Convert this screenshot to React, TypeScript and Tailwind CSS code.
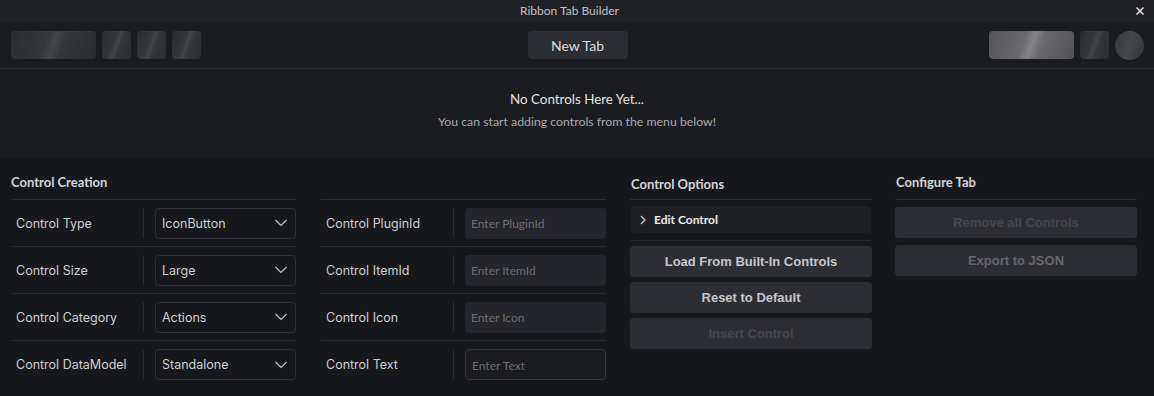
import React from 'react';

const src = { fontFamily: 'Lato, "Noto Sans", sans-serif' };
const ui = { fontFamily: 'Inter, "Noto Sans", sans-serif' };
const arial = { fontFamily: '"Liberation Sans", Arial, sans-serif' };

const Skeleton = ({ className, light }: { className: string; light?: boolean }) => (
  <div
    className={`h-[28px] rounded-[4px] ${className} ${
      light
        ? 'bg-[linear-gradient(110deg,#54555a_0%,#6a6a6e_40%,#858586_50%,#6a6a6e_60%,#505156_100%)]'
        : 'bg-[linear-gradient(110deg,#2c2d31_0%,#36373b_40%,#444549_50%,#36373b_60%,#2b2c30_100%)]'
    }`}
  />
);

const ChevronDown = () => (
  <svg width="12" height="8" viewBox="0 0 12 8" fill="none" className="shrink-0">
    <polyline points="0.5,1 6,6.5 11.5,1" stroke="#c8c8cc" strokeWidth="1.1" />
  </svg>
);

const Row = ({ label, children, last }: { label: string; children: React.ReactNode; last?: boolean }) => (
  <div className={`h-[47px] flex items-center ${last ? '' : 'border-b border-[#2b2c31]'}`}>
    <div className="w-[132px] pl-[5px] pt-[2px] text-[12.5px] text-[#cfd0d3]" style={ui}>{label}</div>
    <div className="w-px h-[30px] bg-[#2b2c31]" />
    <div className="flex-1 pl-[11px]">{children}</div>
  </div>
);

const Select = ({ value }: { value: string }) => (
  <div className="h-[31px] rounded-[4px] border border-[#2f3036] flex items-center justify-between pl-[6px] pr-[8px]">
    <span className="text-[12.5px] text-[#cfd0d3] pt-[2px]" style={ui}>{value}</span>
    <ChevronDown />
  </div>
);

const Input = ({ placeholder, bordered }: { placeholder: string; bordered?: boolean }) => (
  <div
    className={`h-[31px] rounded-[4px] flex items-center pl-[6px] ${
      bordered ? 'border border-[#33343a] bg-[#1b1c20]' : 'bg-[#25262b]'
    }`}
  >
    <span className="text-[12px] text-[#6c6d72] pt-[2px]" style={src}>{placeholder}</span>
  </div>
);

const Btn = ({ children, disabled }: { children: React.ReactNode; disabled?: boolean }) => (
  <div
    className={`h-[31px] rounded-[4px] bg-[#2d2e33] flex items-center justify-center text-[13px] font-bold ${
      disabled ? 'text-[#46474d]' : 'text-[#c5c6ca]'
    }`}
    style={arial}
  >
    {children}
  </div>
);

const Heading = ({ children, className }: { children: React.ReactNode; className?: string }) => (
  <div className={`h-[42px] flex items-end border-b border-[#2b2c31] text-[13px] font-bold text-[#d4d5d8] ${className || 'pb-[7px]'}`} style={src}>
    {children}
  </div>
);

export default function App() {
  return (
    <div className="w-[1154px] h-[396px] bg-[#1b1c20] flex flex-col overflow-hidden">
      {/* title bar */}
      <div className="h-[22px] bg-[#202125] flex items-center justify-center pr-[15px] relative shrink-0">
        <span className="text-[12px] text-[#bfc0c4]" style={src}>Ribbon Tab Builder</span>
        <svg className="absolute right-[10px] top-[7px]" width="8" height="8" viewBox="0 0 8 8">
          <path d="M0.5 0.5 L7.5 7.5 M7.5 0.5 L0.5 7.5" stroke="#e8e8ea" strokeWidth="1.5" />
        </svg>
      </div>

      {/* toolbar */}
      <div className="h-[47px] shrink-0 flex items-center justify-between pl-[11px] pr-[10px] border-b border-[#2b2c31]">
        <div className="flex gap-[6px] w-[190px]">
          <Skeleton className="w-[85px]" />
          <Skeleton className="w-[29px]" />
          <Skeleton className="w-[29px]" />
          <Skeleton className="w-[29px]" />
        </div>
        <div className="w-[100px] h-[28px] rounded-[4px] bg-[#2d2e33] flex items-center justify-center text-[14px] text-[#dcdde0]" style={src}>
          New Tab
        </div>
        <div className="flex gap-[6px] w-[190px] justify-end">
          <Skeleton className="w-[85px]" light />
          <Skeleton className="w-[29px]" />
          <div className="w-[29px] h-[29px] rounded-full bg-[linear-gradient(110deg,#36373b_0%,#46474b_50%,#34353a_100%)]" />
        </div>
      </div>

      {/* empty state */}
      <div className="h-[89px] shrink-0 flex flex-col items-center pt-[21px]">
        <div className="text-[13.4px] text-[#e2e3e6] leading-[18px]" style={src}>No Controls Here Yet...</div>
        <div className="text-[12.3px] text-[#a9aaae] leading-[16px] mt-[6px]" style={src}>You can start adding controls from the menu below!</div>
      </div>

      {/* panel */}
      <div className="flex-1 bg-[#17181c] flex pl-[11px]">
        <div className="w-[285px]">
          <Heading>Control Creation</Heading>
          <Row label="Control Type"><Select value="IconButton" /></Row>
          <Row label="Control Size"><Select value="Large" /></Row>
          <Row label="Control Category"><Select value="Actions" /></Row>
          <Row label="Control DataModel" last><Select value="Standalone" /></Row>
        </div>

        <div className="w-[285px] ml-[25px]">
          <Heading>&nbsp;</Heading>
          <Row label="Control PluginId"><Input placeholder="Enter PluginId" /></Row>
          <Row label="Control ItemId"><Input placeholder="Enter ItemId" /></Row>
          <Row label="Control Icon"><Input placeholder="Enter Icon" /></Row>
          <Row label="Control Text" last><Input placeholder="Enter Text" bordered /></Row>
        </div>

        <div className="w-[242px] ml-[24px]">
          <Heading className="pl-[1px] pb-[5px]">Control Options</Heading>
          <div className="mx-[1px] mt-[6px] h-[27px] rounded-[4px] bg-[#1f2024] flex items-center pl-[9px] gap-[8px]">
            <svg width="6" height="10" viewBox="0 0 6 10" fill="none">
              <polyline points="1,1 5,5 1,9" stroke="#c8c8cc" strokeWidth="1.3" />
            </svg>
            <span className="text-[12px] font-bold text-[#ececee]" style={src}>Edit Control</span>
          </div>
          <div className="mt-[7px] mx-[1px] border-b border-[#2b2c31]" />
          <div className="mt-[5px] flex flex-col gap-[5px]">
            <Btn>Load From Built-In Controls</Btn>
            <Btn>Reset to Default</Btn>
            <Btn disabled>Insert Control</Btn>
          </div>
        </div>

        <div className="w-[242px] ml-[23px]">
          <Heading className="pl-[1px] pb-[7px]">Configure Tab</Heading>
          <div className="mt-[7px] flex flex-col gap-[7px]">
            <Btn disabled>Remove all Controls</Btn>
            <div className="h-[31px] rounded-[4px] bg-[#2d2e33] flex items-center justify-center text-[13px] font-bold text-[#65666b]" style={arial}>
              Export to JSON
            </div>
          </div>
        </div>
      </div>
    </div>
  );
}
